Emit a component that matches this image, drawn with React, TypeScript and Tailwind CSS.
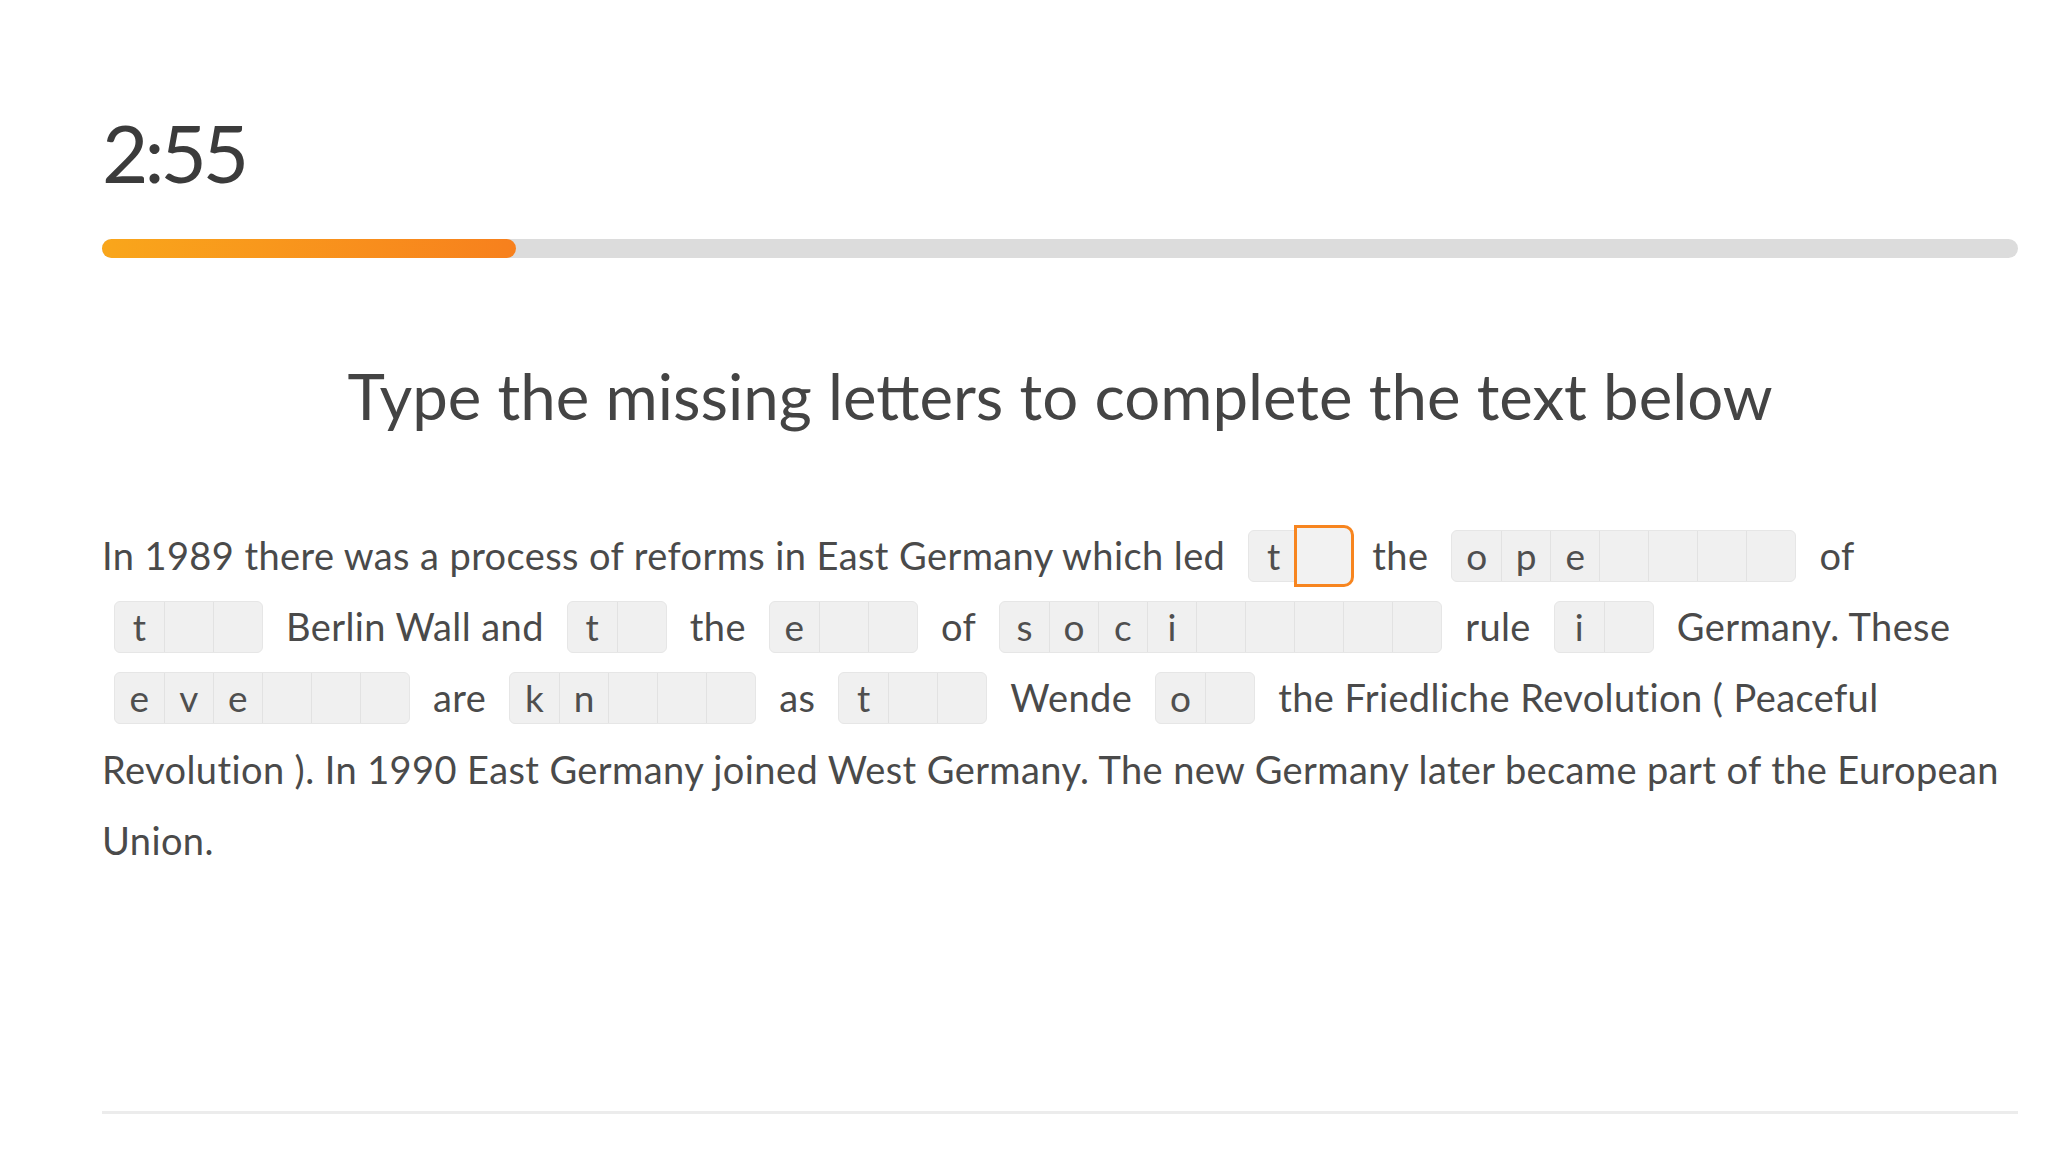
const FONT = "font-['Lato','Liberation_Sans',sans-serif]";

type Blank = { letters: string[]; size: number; focus?: boolean };

function LetterBox({ letters, size, focus }: Blank) {
  const cells = Array.from({ length: size }, (_, i) => letters[i] ?? "");
  return (
    <span className="mx-[12px] inline-flex h-[52px] items-center rounded-[6px] border border-[#e6e6e6] bg-[#f0f0f0] align-middle">
      {cells.map((ch, i) => {
        if (focus && i === letters.length) {
          return (
            <span
              key={i}
              className="-ml-[4px] -mr-[6px] flex h-[62px] w-[60px] items-center justify-center rounded-r-[10px] border-[3px] border-[#f7851f] bg-[#f2f2f2]"
            />
          );
        }
        return (
          <span
            key={i}
            className={`flex h-full w-[49px] items-center justify-center text-[37px] text-[#4f4f4f] ${
              i > 0 ? "border-l border-[#e2e2e2]" : ""
            }`}
          >
            {ch}
          </span>
        );
      })}
    </span>
  );
}

type Piece = string | Blank;

const LINES: Piece[][] = [
  [
    "In 1989 there was a process of reforms in East Germany which led",
    { letters: ["t"], size: 2, focus: true },
    "the",
    { letters: ["o", "p", "e"], size: 7 },
    "of",
  ],
  [
    { letters: ["t"], size: 3 },
    "Berlin Wall and",
    { letters: ["t"], size: 2 },
    "the",
    { letters: ["e"], size: 3 },
    "of",
    { letters: ["s", "o", "c", "i"], size: 9 },
    "rule",
    { letters: ["i"], size: 2 },
    "Germany. These",
  ],
  [
    { letters: ["e", "v", "e"], size: 6 },
    "are",
    { letters: ["k", "n"], size: 5 },
    "as",
    { letters: ["t"], size: 3 },
    "Wende",
    { letters: ["o"], size: 2 },
    "the Friedliche Revolution ( Peaceful",
  ],
  [
    "Revolution ). In 1990 East Germany joined West Germany. The new Germany later became part of the European",
  ],
  ["Union."],
];

export default function App() {
  return (
    <div className={`min-h-[1152px] w-full bg-white pl-[102px] pr-[30px] ${FONT}`}>
      {/* Timer */}
      <div className="pt-[104px] text-[80px] leading-[96px] tracking-[-4px] text-[#3b3b3b]">2:55</div>

      {/* Progress */}
      <div className="mt-[39px] h-[19px] w-full rounded-full bg-[#dcdcdc]">
        <div className="h-full w-[21.6%] rounded-full bg-gradient-to-r from-[#f9a61b] to-[#f7801d]" />
      </div>

      {/* Instruction */}
      <h1 className="mt-[100px] text-center text-[63.5px] leading-[76px] text-[#444444]">
        Type the missing letters to complete the text below
      </h1>

      {/* Exercise text */}
      <div className="mt-[84px] text-[38px] tracking-[0.4px] text-[#4a4a4a]">
        {LINES.map((line, li) => (
          <div key={li} className="flex h-[71px] items-center whitespace-nowrap">
            <div>
              {line.map((p, pi) =>
                typeof p === "string" ? (
                  <span
                    key={pi}
                    className={`align-middle ${pi > 0 ? "ml-[11px]" : ""} ${
                      pi < line.length - 1 ? "mr-[11px]" : ""
                    }`}
                  >
                    {p}
                  </span>
                ) : (
                  <LetterBox key={pi} {...p} />
                ),
              )}
            </div>
          </div>
        ))}
      </div>

      <div className="mt-[238px] h-[3px] w-full bg-[#ececec]" />
    </div>
  );
}
